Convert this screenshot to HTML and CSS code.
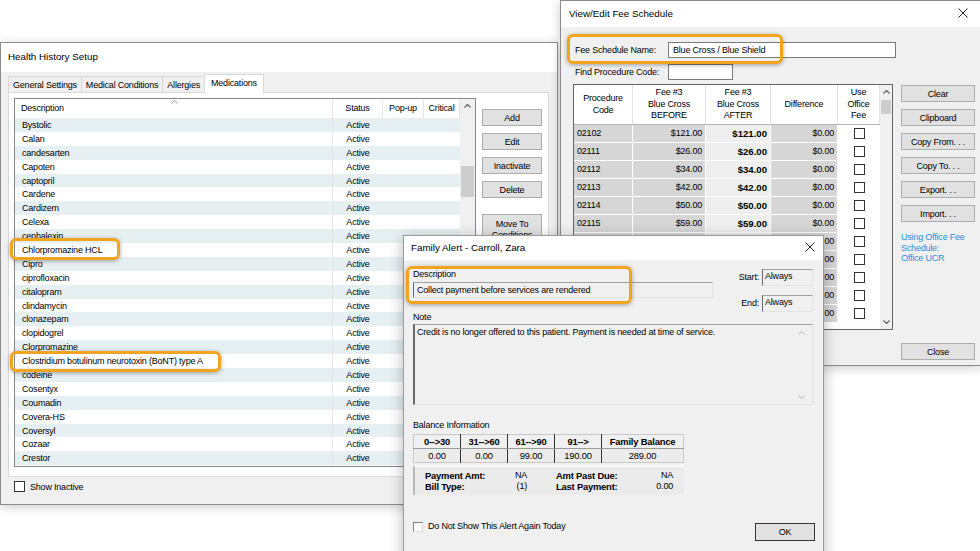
FILE: index.html
```html
<!DOCTYPE html>
<html lang="en">
<head>
<meta charset="UTF-8">
<meta name="viewport" content="width=device-width, initial-scale=1.0">
<title>Health History and Fee Schedule</title>
<link rel="stylesheet" href="styles.css">
</head>
<body>
<div class="desk">

  <!-- Health History Setup window -->
  <section class="win hhWin">
    <div class="titleBar">Health History Setup</div>
    <div class="hhBody">
      <div class="tabs">
        <span class="tab">General Settings</span>
        <span class="tab">Medical Conditions</span>
        <span class="tab">Allergies</span>
        <span class="tab active">Medications</span>
      </div>
      <div class="tabPanel">
        <div class="medList">
          <div class="medMain">
            <div class="medHead">
              <span class="descHead">Description
                <svg class="sortArrow" width="7" height="4" viewBox="0 0 7 4"><polyline points="0.5,3.5 3.5,0.5 6.5,3.5" fill="none" stroke="#9a9a9a" stroke-width="1"/></svg>
              </span>
              <span>Status</span>
              <span>Pop-up</span>
              <span>Critical</span>
            </div>
            <div class="medRow"><span>Bystolic</span><span>Active</span><span></span><span></span></div>
            <div class="medRow"><span>Calan</span><span>Active</span><span></span><span></span></div>
            <div class="medRow"><span>candesarten</span><span>Active</span><span></span><span></span></div>
            <div class="medRow"><span>Capoten</span><span>Active</span><span></span><span></span></div>
            <div class="medRow"><span>captopril</span><span>Active</span><span></span><span></span></div>
            <div class="medRow"><span>Cardene</span><span>Active</span><span></span><span></span></div>
            <div class="medRow"><span>Cardizem</span><span>Active</span><span></span><span></span></div>
            <div class="medRow"><span>Celexa</span><span>Active</span><span></span><span></span></div>
            <div class="medRow"><span>cephalexin</span><span>Active</span><span></span><span></span></div>
            <div class="medRow"><span>Chlorpromazine HCL</span><span>Active</span><span></span><span></span></div>
            <div class="medRow"><span>Cipro</span><span>Active</span><span></span><span></span></div>
            <div class="medRow"><span>ciprofloxacin</span><span>Active</span><span></span><span></span></div>
            <div class="medRow"><span>citalopram</span><span>Active</span><span></span><span></span></div>
            <div class="medRow"><span>clindamycin</span><span>Active</span><span></span><span></span></div>
            <div class="medRow"><span>clonazepam</span><span>Active</span><span></span><span></span></div>
            <div class="medRow"><span>clopidogrel</span><span>Active</span><span></span><span></span></div>
            <div class="medRow"><span>Clorpromazine</span><span>Active</span><span></span><span></span></div>
            <div class="medRow"><span>Clostridium botulinum neurotoxin (BoNT) type A</span><span>Active</span><span></span><span></span></div>
            <div class="medRow"><span>codeine</span><span>Active</span><span></span><span></span></div>
            <div class="medRow"><span>Cosentyx</span><span>Active</span><span></span><span></span></div>
            <div class="medRow"><span>Coumadin</span><span>Active</span><span></span><span></span></div>
            <div class="medRow"><span>Covera-HS</span><span>Active</span><span></span><span></span></div>
            <div class="medRow"><span>Coversyl</span><span>Active</span><span></span><span></span></div>
            <div class="medRow"><span>Cozaar</span><span>Active</span><span></span><span></span></div>
            <div class="medRow"><span>Crestor</span><span>Active</span><span></span><span></span></div>
          </div>
          <div class="vScroll">
            <svg class="arrowUp" width="7" height="4" viewBox="0 0 7 4"><polyline points="0.5,3.5 3.5,0.5 6.5,3.5" fill="none" stroke="#606060" stroke-width="1.2"/></svg>
            <div class="thumb medThumb"></div>
          </div>
        </div>
        <div class="sideButtons">
          <button class="hhBtn">Add</button>
          <button class="hhBtn">Edit</button>
          <button class="hhBtn">Inactivate</button>
          <button class="hhBtn">Delete</button>
          <button class="hhBtn moveBtn">Move To<br>Conditions</button>
        </div>
      </div>
      <div class="showInactive"><span class="checkBox"></span>Show Inactive</div>
    </div>
  </section>

  <!-- View/Edit Fee Schedule window -->
  <section class="win feeWin">
    <div class="titleBar">
      View/Edit Fee Schedule
      <svg class="closeX" width="10" height="10" viewBox="0 0 10 10"><path d="M0.5 0.5L9.5 9.5M9.5 0.5L0.5 9.5" stroke="#222" stroke-width="1"/></svg>
    </div>
    <div class="feeBody">
      <div class="feeForm">
        <span>Fee Schedule Name:</span>
        <span class="textBox nameBox">Blue Cross / Blue Shield</span>
        <span>Find Procedure Code:</span>
        <span class="textBox codeBox"></span>
      </div>
      <div class="feeMain">
        <div class="feeTable">
          <div class="feeGrid">
            <div class="feeHead">
              <span>Procedure<br>Code</span>
              <span>Fee #3<br>Blue Cross<br>BEFORE</span>
              <span>Fee #3<br>Blue Cross<br>AFTER</span>
              <span>Difference</span>
              <span>Use<br>Office<br>Fee</span>
            </div>
            <div class="feeRow"><span>02102</span><span>$121.00</span><span>$121.00</span><span>$0.00</span><span><i class="checkBox"></i></span></div>
            <div class="feeRow"><span>02111</span><span>$26.00</span><span>$26.00</span><span>$0.00</span><span><i class="checkBox"></i></span></div>
            <div class="feeRow"><span>02112</span><span>$34.00</span><span>$34.00</span><span>$0.00</span><span><i class="checkBox"></i></span></div>
            <div class="feeRow"><span>02113</span><span>$42.00</span><span>$42.00</span><span>$0.00</span><span><i class="checkBox"></i></span></div>
            <div class="feeRow"><span>02114</span><span>$50.00</span><span>$50.00</span><span>$0.00</span><span><i class="checkBox"></i></span></div>
            <div class="feeRow"><span>02115</span><span>$59.00</span><span>$59.00</span><span>$0.00</span><span><i class="checkBox"></i></span></div>
            <div class="feeRow"><span>02116</span><span>$68.00</span><span>$68.00</span><span>$0.00</span><span><i class="checkBox"></i></span></div>
            <div class="feeRow"><span>02117</span><span>$77.00</span><span>$77.00</span><span>$0.00</span><span><i class="checkBox"></i></span></div>
            <div class="feeRow"><span>02118</span><span>$86.00</span><span>$86.00</span><span>$0.00</span><span><i class="checkBox"></i></span></div>
            <div class="feeRow"><span>02120</span><span>$95.00</span><span>$95.00</span><span>$0.00</span><span><i class="checkBox"></i></span></div>
            <div class="feeRow"><span>02121</span><span>$104.00</span><span>$104.00</span><span>$0.00</span><span><i class="checkBox"></i></span></div>
          </div>
          <div class="vScroll feeScroll">
            <svg width="7" height="4" viewBox="0 0 7 4"><polyline points="0.5,3.5 3.5,0.5 6.5,3.5" fill="none" stroke="#606060" stroke-width="1.2"/></svg>
            <div class="thumb feeThumb"></div>
            <svg class="arrowDown" width="7" height="4" viewBox="0 0 7 4"><polyline points="0.5,0.5 3.5,3.5 6.5,0.5" fill="none" stroke="#606060" stroke-width="1.2"/></svg>
          </div>
        </div>
        <div class="feeSide">
          <button class="feeBtn">Clear</button>
          <button class="feeBtn">Clipboard</button>
          <button class="feeBtn">Copy From. . .</button>
          <button class="feeBtn">Copy To. . .</button>
          <button class="feeBtn">Export. . .</button>
          <button class="feeBtn">Import. . .</button>
          <div class="officeLink">Using Office Fee<br>Schedule:<br>Office UCR</div>
          <button class="feeBtn closeBtn">Close</button>
        </div>
      </div>
    </div>
  </section>

  <!-- Family Alert dialog -->
  <section class="win alertWin">
    <div class="titleBar">
      Family Alert - Carroll, Zara
      <svg class="closeX" width="10" height="10" viewBox="0 0 10 10"><path d="M0.5 0.5L9.5 9.5M9.5 0.5L0.5 9.5" stroke="#222" stroke-width="1"/></svg>
    </div>
    <div class="alertBody">
      <div class="alertTop">
        <div class="descGroup">
          <div>Description</div>
          <div class="sunken descBox">Collect payment before services are rendered</div>
        </div>
        <div class="dateGroup">
          <div class="dateRow"><span>Start:</span><span class="sunken dateBox">Always</span></div>
          <div class="dateRow"><span>End:</span><span class="sunken dateBox">Always</span></div>
        </div>
      </div>
      <div>Note</div>
      <div class="sunken noteBox">
        <div class="noteText">Credit is no longer offered to this patient. Payment is needed at time of service.</div>
        <div class="noteScroll">
          <svg width="7" height="4" viewBox="0 0 7 4"><polyline points="0.5,3.5 3.5,0.5 6.5,3.5" fill="none" stroke="#b0b0b0" stroke-width="1"/></svg>
          <svg width="7" height="4" viewBox="0 0 7 4"><polyline points="0.5,0.5 3.5,3.5 6.5,0.5" fill="none" stroke="#b0b0b0" stroke-width="1"/></svg>
        </div>
      </div>
      <div class="balanceLabel">Balance Information</div>
      <table class="balanceTable">
        <tr><th>0--&gt;30</th><th>31--&gt;60</th><th>61--&gt;90</th><th>91--&gt;</th><th>Family Balance</th></tr>
        <tr><td>0.00</td><td>0.00</td><td>99.00</td><td>190.00</td><td>289.00</td></tr>
      </table>
      <div class="summaryBox">
        <b>Payment Amt:</b><span class="num">NA</span><b class="right">Amt Past Due:</b><span class="num">NA</span>
        <b>Bill Type:</b><span class="num">(1)</span><b class="right">Last Payment:</b><span class="num">0.00</span>
      </div>
      <div class="alertFoot">
        <div class="dontShow"><span class="classicBox"></span>Do Not Show This Alert Again Today</div>
        <button class="okBtn">OK</button>
      </div>
    </div>
  </section>

  <!-- orange call-outs drawn over the screens -->
  <div class="callout" style="left:10px; top:238px; width:110px; height:22px;"></div>
  <div class="callout" style="left:10px; top:351px; width:211px; height:21px;"></div>
  <div class="callout" style="left:567px; top:34px; width:216px; height:30px;"></div>
  <div class="callout" style="left:406px; top:266px; width:226px; height:38px;"></div>

</div>
</body>
</html>
```

FILE: styles.css
```css
body {
  margin: 0;
  background-color: #ffffff;
  font-family: "Liberation Sans", Arial, sans-serif;
  font-size: 9px;
  letter-spacing: -0.2px;
  color: #000;
}

.desk {
  position: relative;
  width: 980px;
  height: 551px;
  overflow: hidden;
  background-color: #fff;
}

/* Shared window frame */
.win {
  position: absolute;
  box-sizing: border-box;
  display: flex;
  flex-direction: column;
  background-color: #f0f0f0;
  border: 1px solid #8c8c8c;
  box-shadow: 0 2px 10px rgba(0, 0, 0, 0.2);
}

.titleBar {
  box-sizing: border-box;
  display: flex;
  align-items: center;
  justify-content: space-between;
  flex-shrink: 0;
  background-color: #fff;
  font-size: 9.8px;
  letter-spacing: 0;
  padding: 0 11px 2px 7px;
}

button {
  font-family: inherit;
  font-size: inherit;
  letter-spacing: inherit;
  color: #000;
  background-color: #e1e1e1;
  border: 1px solid #adadad;
  padding: 0;
  box-sizing: border-box;
}

.checkBox {
  display: inline-block;
  box-sizing: border-box;
  width: 11px;
  height: 11px;
  background-color: #fff;
  border: 1px solid #333;
}

/* Scrollbars */
.vScroll {
  display: flex;
  flex-direction: column;
  align-items: center;
  background-color: #f0f0f0;
}

.thumb {
  background-color: #cdcdcd;
  align-self: stretch;
  margin: 0 1px;
}

/* ---------- Health History Setup ---------- */
.hhWin {
  left: 0;
  top: 42px;
  width: 558px;
  height: 463px;
}

.hhWin .titleBar {
  height: 29px;
}

.hhBody {
  padding: 0 7px;
}

.tabs {
  display: flex;
  align-items: flex-end;
  height: 20px;
}

.tab {
  box-sizing: border-box;
  height: 16px;
  line-height: 16px;
  padding: 0 4px;
  border: 1px solid #d9d9d9;
  border-bottom: none;
  margin-right: -1px;
  background-color: #f0f0f0;
}

.tab.active {
  position: relative;
  z-index: 1;
  height: 19px;
  line-height: 16px;
  padding: 0 6px;
  margin-bottom: -1px;
  background-color: #fff;
}

.tabPanel {
  box-sizing: border-box;
  display: flex;
  gap: 6px;
  width: 541px;
  height: 385px;
  padding: 5px;
  background-color: #fff;
  border: 1px solid #d9d9d9;
}

.medList {
  box-sizing: border-box;
  display: flex;
  width: 462px;
  height: 369px;
  border: 1px solid #828790;
}

.medMain {
  width: 445px;
  overflow: hidden;
}

.medHead,
.medRow {
  display: grid;
  grid-template-columns: 318px 50px 41px 36px;
}

.medHead {
  height: 19px;
  line-height: 19px;
}

.medHead span {
  text-align: center;
  border-right: 1px solid #e5e5e5;
}

.medHead .descHead {
  position: relative;
  text-align: left;
  padding-left: 6px;
}

.sortArrow {
  position: absolute;
  top: 1px;
  left: 156px;
}

.medRow {
  height: 13.9px;
  line-height: 14.5px;
}

.medRow:nth-child(even) {
  background-color: #e6eff2;
}

.medRow span {
  text-align: center;
  white-space: nowrap;
}

.medRow span:first-child {
  text-align: left;
  padding-left: 7px;
  border-right: 1px solid #e6e6e6;
}

.medList .vScroll {
  width: 15px;
}

.arrowUp {
  margin-top: 5px;
}

.medThumb {
  height: 31px;
  margin-top: 58px;
}

.sideButtons {
  display: flex;
  flex-direction: column;
  gap: 7px;
  padding-top: 11px;
}

.hhBtn {
  width: 60px;
  height: 17px;
}

.moveBtn {
  height: 31px;
  margin-top: 9px;
  line-height: 11px;
}

.showInactive {
  display: flex;
  align-items: center;
  gap: 5px;
  margin: 4px 0 0 6px;
}

/* ---------- View/Edit Fee Schedule ---------- */
.feeWin {
  left: 560px;
  top: 0;
  width: 421px;
  height: 366px;
}

.feeWin .titleBar {
  height: 26px;
  padding-left: 8px;
  padding-right: 12px;
}

.feeBody {
  display: flex;
  flex-direction: column;
  flex: 1;
  padding: 15px 0 5px 12px;
}

.feeForm {
  display: grid;
  grid-template-columns: 93px auto;
  row-gap: 6px;
  align-items: center;
  padding-left: 2px;
}

.textBox {
  box-sizing: border-box;
  height: 16px;
  line-height: 14px;
  padding-left: 4px;
  background-color: #fff;
  border: 1px solid #7a7a7a;
}

.nameBox {
  width: 228px;
}

.codeBox {
  width: 65px;
}

.feeMain {
  display: flex;
  gap: 8px;
  flex: 1;
  margin-top: 4px;
}

.feeTable {
  box-sizing: border-box;
  display: flex;
  width: 320px;
  height: 246px;
  border: 1px solid #646464;
  background-color: #fff;
}

.feeGrid {
  width: 306px;
  overflow: hidden;
}

.feeHead,
.feeRow {
  display: grid;
  grid-template-columns: 59px 73px 65px 67px 42px;
}

.feeHead {
  height: 40px;
  line-height: 11.5px;
  border-bottom: 1px solid #b5b5b5;
  box-sizing: border-box;
}

.feeHead span {
  display: flex;
  align-items: center;
  justify-content: center;
  text-align: center;
  border-right: 1px solid #e3e3e3;
}

.feeRow {
  height: 18px;
  line-height: 17px;
}

.feeRow span {
  box-sizing: border-box;
  text-align: right;
  padding-right: 3px;
  background-color: #d6d6d6;
  border-right: 1px solid #fff;
  border-bottom: 1px solid #fff;
}

.feeRow span:first-child {
  text-align: left;
  padding-left: 3px;
}

.feeRow span:nth-child(3) {
  background-color: #eeeeee;
  font-weight: bold;
  font-size: 9.6px;
  letter-spacing: 0;
}

.feeRow span:last-child {
  display: flex;
  align-items: center;
  justify-content: center;
  padding: 0;
  background-color: #fff;
  border-right: none;
}

.feeScroll {
  width: 12px;
  padding-top: 5px;
}

.feeThumb {
  height: 14px;
  margin-top: 6px;
}

.arrowDown {
  margin-top: auto;
  margin-bottom: 5px;
}

.feeSide {
  display: flex;
  flex-direction: column;
  gap: 7px;
  width: 74px;
  padding-top: 1px;
}

.feeBtn {
  width: 74px;
  height: 17px;
}

.officeLink {
  margin-top: 3px;
  color: #2a8ee3;
  line-height: 10.5px;
}

.closeBtn {
  margin-top: auto;
}

/* ---------- Family Alert ---------- */
.alertWin {
  left: 403px;
  top: 235px;
  width: 421px;
  height: 330px;
  border-color: #9a9a9a;
  box-shadow: 0 3px 14px rgba(0, 0, 0, 0.28);
}

.alertWin .titleBar {
  height: 24px;
  padding-right: 8px;
}

.alertBody {
  padding: 9px 0 0 9px;
  line-height: 11px;
}

.sunken {
  box-sizing: border-box;
  background-color: #f0f0f0;
  border-top: 1px solid #a0a0a0;
  border-left: 1px solid #696969;
  border-right: 1px solid #e3e3e3;
  border-bottom: 1px solid #e3e3e3;
}

.alertTop {
  display: flex;
  justify-content: space-between;
  width: 400px;
  height: 43px;
}

.descBox {
  width: 300px;
  height: 16px;
  margin-top: 2px;
  padding: 2px 0 0 3px;
}

.dateGroup {
  display: flex;
  flex-direction: column;
  gap: 9px;
}

.dateRow {
  display: flex;
  justify-content: flex-end;
  align-items: center;
  gap: 3px;
}

.dateBox {
  width: 51px;
  height: 17px;
  padding: 1px 0 0 2px;
}

.noteBox {
  display: flex;
  width: 400px;
  height: 81px;
  margin-top: 1px;
  border-left-width: 2px;
}

.noteText {
  flex: 1;
  padding: 2px 0 0 2px;
}

.noteScroll {
  display: flex;
  flex-direction: column;
  justify-content: space-between;
  width: 14px;
  padding: 6px 0 5px;
}

.balanceLabel {
  margin-top: 15px;
}

.balanceTable {
  width: 271px;
  margin-top: 3px;
  border-collapse: collapse;
  border: 1px solid #c9c9c9;
  text-align: center;
}

.balanceTable th,
.balanceTable td {
  height: 13px;
  padding: 0;
  border-right: 1px solid #333;
  font-size: 9.4px;
}

.balanceTable th {
  border-bottom: 1px solid #9a9a9a;
}

.balanceTable td {
  background-color: #ececec;
}

.balanceTable th:nth-child(-n+4) {
  width: 46px;
}

.balanceTable th:last-child,
.balanceTable td:last-child {
  border-right: none;
}

.summaryBox {
  box-sizing: border-box;
  display: grid;
  grid-template-columns: 76px 26px 113px 33px;
  align-content: center;
  width: 271px;
  height: 30px;
  margin-top: 2px;
  padding-left: 10px;
  background-color: #ebebeb;
  border-top: 2px solid #fafafa;
  border-left: 2px solid #b9b9b9;
  line-height: 11px;
  white-space: nowrap;
}

.summaryBox b {
  font-size: 9.4px;
}

.summaryBox .right {
  padding-left: 29px;
}

.summaryBox .num {
  text-align: right;
}

.alertFoot {
  display: flex;
  justify-content: space-between;
  align-items: flex-start;
  width: 402px;
  margin-top: 26px;
}

.dontShow {
  display: flex;
  align-items: center;
  gap: 5px;
}

.classicBox {
  box-sizing: border-box;
  width: 10px;
  height: 10px;
  background-color: #fff;
  border-top: 1px solid #808080;
  border-left: 1px solid #808080;
  border-right: 1px solid #dcdcdc;
  border-bottom: 1px solid #dcdcdc;
}

.okBtn {
  width: 60px;
  height: 18px;
  margin-top: 2px;
  border: 1px solid #333;
  background-color: #e1e1e1;
}

/* Orange highlight boxes */
.callout {
  position: absolute;
  box-sizing: border-box;
  border: 3px solid #f2a31f;
  border-radius: 6px;
  box-shadow: 0 1px 4px rgba(0, 0, 0, 0.35);
}
```
